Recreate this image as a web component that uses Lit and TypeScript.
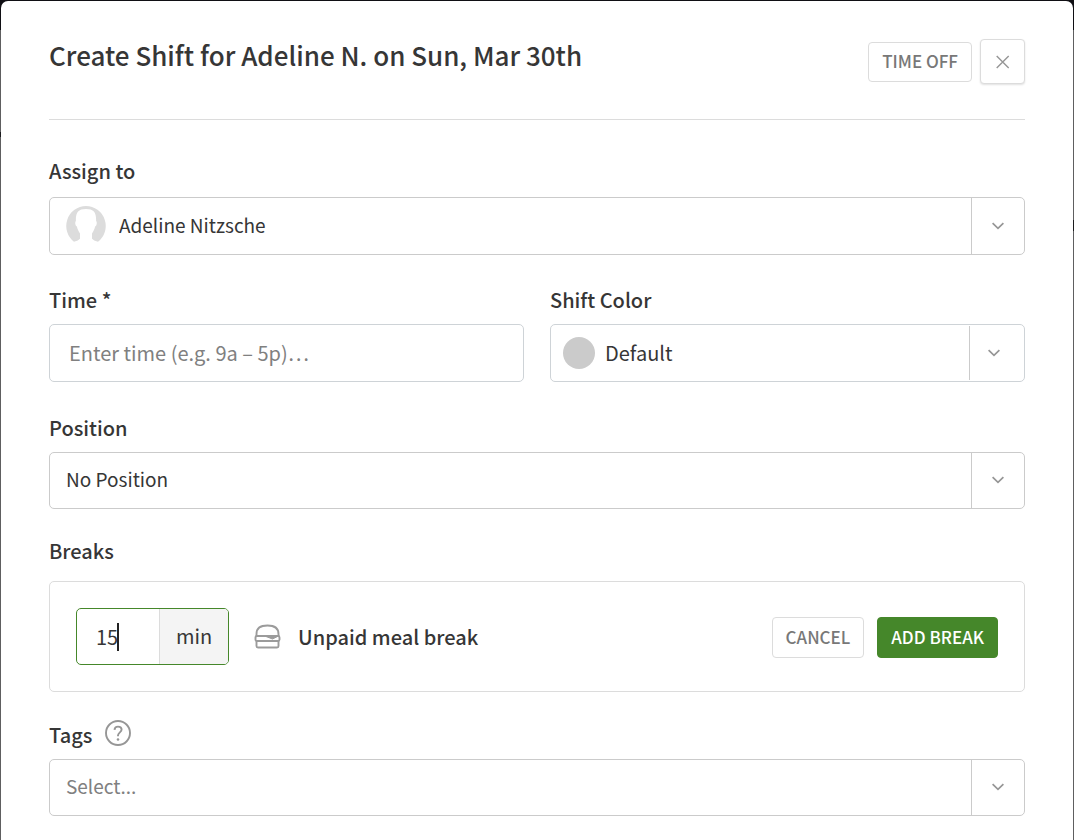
import { LitElement, html, css, svg } from "lit";
import { customElement, property, state } from "lit/decorators.js";

const chevron = html`<svg class="chevron" viewBox="0 0 14 8" width="14" height="8" aria-hidden="true">
  ${svg`<path d="M1.6 1.2 7 6.400l5.400-5.200" fill="none" stroke="#969696" stroke-width="1.700" />`}
</svg>`;

@customElement("app-root")
export class AppRoot extends LitElement {
  @property() employee = "Adeline Nitzsche";
  @state() private minutes = "15";

  static styles = css`
    :host {
      display: flex;
      box-sizing: border-box;
      min-height: 100vh;
      padding: 1px 1px 0;
      background:
        linear-gradient(#1c1c1e, #1c1c1e) 0 132px / 1px 5px no-repeat,
        linear-gradient(#1c1c1e, #1c1c1e) 100% 220px / 1px 11px no-repeat,
        linear-gradient(#100f14 30px, #5e5e60 30px);
      color: #363636;
      font-family: "Noto Sans CJK SC", "Noto Sans", sans-serif;
      font-size: 19px;
    }
    *, *::before, *::after { box-sizing: border-box; }
    .modal {
      flex: 1;
      min-width: 0;
      padding: 38px 48px 24px;
      background: #fff;
      border-radius: 7px 7px 0 0;
    }
    .header {
      display: flex;
      justify-content: space-between;
      gap: 24px;
      height: 81px;
      border-bottom: 1px solid #dcdcdc;
    }
    h1 { margin: 0; font-size: 26px; line-height: 32px; font-weight: 500; }
    .actions { display: flex; align-items: center; gap: 8px; height: 45px; }
    button {
      font: inherit;
      font-size: 17px;
      font-weight: 500;
      line-height: 24px;
      padding: 0 13px 2px;
      height: 40px;
      border: 1px solid #dcdcdc;
      border-radius: 4px;
      background: #fff;
      color: #787878;
      white-space: nowrap;
    }
    .close {
      display: flex;
      align-items: center;
      justify-content: center;
      width: 45px;
      height: 45px;
      padding: 0;
      box-shadow: 0 1px 2px rgba(0, 0, 0, 0.12);
    }
    .field { margin-top: 34px; min-width: 0; }
    .row .field { margin-top: 33px; }
    .field.first { margin-top: 39px; }
    .field.near { margin-top: 31px; }
    .field.breaks { margin-top: 30px; }
    .row { display: grid; grid-template-columns: 1fr 1fr; gap: 26px; }
    .label {
      display: flex;
      align-items: center;
      margin: 0 0 12px;
      padding: 0;
      font-size: 20px;
      line-height: 24px;
      font-weight: 500;
    }
    .first .label { margin-bottom: 14px; }
    .label.wide { margin-bottom: 18px; }
    .control {
      display: flex;
      align-items: stretch;
      height: 57px;
      border: 1px solid #cbcbcb;
      border-radius: 5px;
      background: #fff;
    }
    .control.tall { height: 58px; }
    .control.cool { border-color: #ced3d7; }
    select, input {
      flex: 1;
      min-width: 0;
      width: 100%;
      margin: 0;
      padding: 0 0 4px 16px;
      border: 0;
      outline: 0;
      background: none;
      appearance: none;
      font: inherit;
      color: inherit;
    }
    .big { padding-bottom: 2px; font-size: 20px; }
    .muted { color: #808080; }
    .time { padding-left: 19px; }
    .time::placeholder { color: #808080; opacity: 1; }
    .avatar { align-self: center; margin-left: 16px; flex: none; }
    .avatar + select { padding-left: 13px; padding-bottom: 3px; }
    .swatch {
      align-self: center;
      flex: none;
      width: 32px;
      height: 32px;
      margin-left: 12px;
      border-radius: 50%;
      background: #cbcbcb;
    }
    .swatch + select { padding-left: 10px; }
    .arrow {
      display: flex;
      align-items: center;
      justify-content: center;
      width: 53px;
      padding-bottom: 1px;
      flex: none;
      border-left: 1px solid #cbcbcb;
      pointer-events: none;
    }
    .cool .arrow { width: 55px; margin: 1px 0; padding-right: 7px; }
    fieldset { border: 0; padding: 0; margin: 0; }
    .break {
      display: flex;
      align-items: center;
      min-height: 111px;
      padding: 26px;
      border: 1px solid #dcdcdc;
      border-radius: 5px;
    }
    .duration {
      position: relative;
      display: flex;
      width: 153px;
      height: 57px;
      overflow: hidden;
      border: 1px solid #45872a;
      border-radius: 5px;
      font-size: 20px;
    }
    .duration input { padding: 0 0 0 19px; }
    .caret {
      position: absolute;
      left: 40px;
      top: 14px;
      width: 2px;
      height: 28px;
      background: #222;
    }
    .unit {
      display: flex;
      align-items: center;
      justify-content: center;
      width: 69px;
      padding-bottom: 2px;
      flex: none;
      border-left: 1px solid #dcdcdc;
      background: #f4f4f4;
    }
    .burger { margin: 0 17px 0 25px; flex: none; }
    .name { font-size: 20px; line-height: 24px; font-weight: 500; }
    .buttons { display: flex; gap: 13px; margin-left: auto; padding-top: 2px; }
    .buttons button { height: 41px; }
    .buttons .primary { border-color: #45872a; background: #45872a; color: #fff; }
    .help {
      display: flex;
      align-items: flex-end;
      width: 26px;
      height: 24px;
      margin-left: 13px;
      padding: 0 0 1px;
      border: 0;
      background: none;
    }
    .help svg { flex: none; }
  `;

  private onMinutes(e: Event) {
    this.minutes = (e.target as HTMLInputElement).value;
  }

  render() {
    return html`
      <main class="modal">
        <header class="header">
          <h1>Create Shift for Adeline N. on Sun, Mar 30th</h1>
          <div class="actions">
            <button type="button">TIME OFF</button>
            <button type="button" class="close" aria-label="Close">
              <svg width="14" height="14" viewBox="0 0 14 14" aria-hidden="true">
                <path d="M.7 1l12 12M12.700 1L.7 13" fill="none" stroke="#969696" stroke-width="1.400" />
              </svg>
            </button>
          </div>
        </header>

        <div class="field first">
          <label class="label" for="assign">Assign to</label>
          <div class="control tall">
            <svg class="avatar" width="40" height="40" viewBox="0 0 40 40" aria-hidden="true">
              <path d="M20 0A20 20 0 0 0 8 35.800q4.500-1 6-3V27.500c-1.500-2.200-2.700-4.500-3.100-7-1.600-.5-2.300-4.300-1-5.400C9.600 6.500 12 2.900 20 2.900S30.400 6.500 30.100 15.100c1.300 1.100.6 4.900-1 5.400-.4 2.500-1.600 4.800-3.100 7v5.300q1.500 2 6 3A20 20 0 0 0 20 0z" fill="#dcdcdc" />
            </svg>
            <select id="assign"><option>${this.employee}</option></select>
            <span class="arrow">${chevron}</span>
          </div>
        </div>

        <div class="row">
          <div class="field">
            <label class="label" for="time">Time *</label>
            <div class="control tall cool">
              <input id="time" class="time big" type="text" placeholder="Enter time (e.g. 9a – 5p)…" />
            </div>
          </div>
          <div class="field">
            <label class="label" for="color">Shift Color</label>
            <div class="control tall cool">
              <span class="swatch"></span>
              <select id="color" class="big"><option>Default</option></select>
              <span class="arrow">${chevron}</span>
            </div>
          </div>
        </div>

        <div class="field">
          <label class="label" for="position">Position</label>
          <div class="control">
            <select id="position"><option>No Position</option></select>
            <span class="arrow">${chevron}</span>
          </div>
        </div>

        <fieldset class="field breaks">
          <legend class="label wide">Breaks</legend>
          <div class="break">
            <div class="duration">
              <input type="text" inputmode="numeric" aria-label="Break length in minutes" .value=${this.minutes} @input=${this.onMinutes} />
              <span class="caret"></span>
              <span class="unit">min</span>
            </div>
            <svg class="burger" width="27" height="25" viewBox="0 0 27 25" fill="none" stroke="#9b9b9b" stroke-width="1.900" aria-hidden="true">
              <path d="M2.500 12V10C2.500 4 6.500 1.500 13.500 1.500S24.500 4 24.500 10V12" />
              <rect x="1.500" y="12" width="24" height="5" rx="1.500" />
              <path d="M12 12.500l6.500 2.500 5-2.500" fill="#9b9b9b" stroke-width="1" />
              <path d="M2.500 17v5q0 1.500 1.500 1.500h19q1.500 0 1.500-1.500v-5" />
            </svg>
            <span class="name">Unpaid meal break</span>
            <div class="buttons">
              <button type="button">CANCEL</button>
              <button type="button" class="primary">ADD BREAK</button>
            </div>
          </div>
        </fieldset>

        <div class="field near">
          <div class="label">
            <label for="tags">Tags</label>
            <button type="button" class="help" aria-label="About tags">
              <svg width="26" height="26" viewBox="0 0 26 26" fill="none" stroke="#969696" aria-hidden="true">
                <circle cx="13" cy="13" r="12" stroke-width="1.900" />
                <path d="M9.500 9.800c.2-2.100 1.500-3.200 3.500-3.200s3.600 1.200 3.600 3c0 2.700-3.600 2.900-3.600 5.900v.8" stroke-width="1.900" />
                <circle cx="13" cy="19.500" r="1.300" fill="#969696" stroke="none" />
              </svg>
            </button>
          </div>
          <div class="control">
            <select id="tags" class="muted"><option>Select...</option></select>
            <span class="arrow">${chevron}</span>
          </div>
        </div>
      </main>
    `;
  }
}
